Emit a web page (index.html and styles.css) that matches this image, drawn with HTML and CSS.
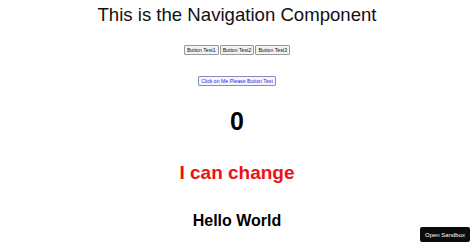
FILE: index.html
```html
<!DOCTYPE html>
<html>
<head>
<meta charset="utf-8">
<link rel="stylesheet" href="styles.css">
</head>
<body>
<div class="app">
  <h1 class="title">This is the Navigation Component</h1>
  <div class="nav">
    <button class="btn">Button Test1</button><button class="btn">Button Test2</button><button class="btn">Button Test3</button>
  </div>
  <div class="click-row">
    <button class="btn btn-blue">Click on Me Please Button Test</button>
  </div>
  <div class="count">0</div>
  <div class="change">I can change</div>
  <div class="hello">Hello World</div>
</div>
<a class="sandbox">Open Sandbox</a>
</body>
</html>
```

FILE: styles.css
```css
html, body {
  margin: 0;
  padding: 0;
  background: #ffffff;
}
body {
  font-family: "Liberation Sans", Arial, sans-serif;
  color: #000;
}
.app {
  display: flex;
  flex-direction: column;
  align-items: center;
  text-align: center;
}
.title {
  margin: 4px 0 0;
  font-size: 18.6px;
  line-height: 22px;
  font-weight: normal;
  color: #111;
}
.nav {
  margin-top: 19px;
  display: flex;
  gap: 1px;
}
.btn {
  font-family: "Liberation Sans", Arial, sans-serif;
  font-size: 5.2px;
  line-height: 6px;
  padding: 1px 2px;
  margin: 0;
  border: 1px solid #9a9a9a;
  border-radius: 1px;
  background: #f2f2f2;
  color: #111;
}
.click-row {
  margin-top: 14px;
}
.btn-blue {
  color: #2b2bd8;
  border-color: #8a8ac0;
  background: #f6f6fa;
}
.count {
  margin-top: 20px;
  font-size: 25px;
  line-height: 29px;
  font-weight: bold;
}
.change {
  margin-top: 26px;
  font-size: 19px;
  line-height: 22px;
  font-weight: bold;
  color: #ee1111;
}
.hello {
  margin-top: 28px;
  font-size: 16px;
  line-height: 18px;
  font-weight: bold;
}
.sandbox {
  position: fixed;
  right: 4px;
  bottom: 6px;
  width: 50px;
  height: 15px;
  display: flex;
  align-items: center;
  justify-content: center;
  background: #0b0b0b;
  color: #fff;
  font-size: 6px;
  border-radius: 2px;
  box-sizing: border-box;
}
```
